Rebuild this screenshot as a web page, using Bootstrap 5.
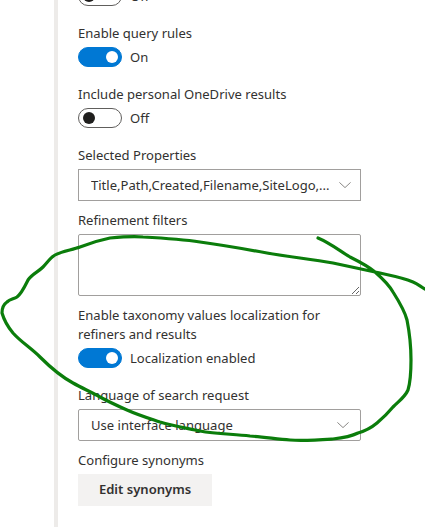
<!DOCTYPE html>
<html lang="en">
<head>
<meta charset="utf-8">
<title>Search settings</title>
<link href="https://cdn.jsdelivr.net/npm/bootstrap@5.3.0/dist/css/bootstrap.min.css" rel="stylesheet">
<style>
html,body{height:527px;overflow:hidden;background:#fff}
body{font-family:"Noto Sans","Open Sans",sans-serif;font-size:13.05px;color:#323130;position:relative}
.side-panel{margin-left:54px;border-left:4px solid #edebe9;padding-left:20px;width:307px;height:541px;margin-top:-14px;box-sizing:content-box}
.fld-wide{margin-top:17px}
.fld-tight{margin-top:9px}
.fld-label{display:block;height:24px;line-height:20px;margin:0;color:#323130}
.fld-label-two{height:43px;line-height:19px;padding-top:.5px}
.sw-row{height:20px;line-height:20px}
.form-check-input.sw{width:44px;height:20px;border-radius:10px;margin:0;float:none;flex:none;box-shadow:none;background-size:12px 12px;background-repeat:no-repeat}
.form-check-input.sw:checked{background-color:#0078d4;border-color:#0078d4;background-position:right 3px center;background-image:url("data:image/svg+xml,%3Csvg xmlns='http://www.w3.org/2000/svg' viewBox='0 0 12 12'%3E%3Ccircle cx='6' cy='6' r='6' fill='%23fff'/%3E%3C/svg%3E")}
.form-check-input.sw:not(:checked){background-color:#fff;border-color:#605e5c;background-position:left 4px center;background-image:url("data:image/svg+xml,%3Csvg xmlns='http://www.w3.org/2000/svg' viewBox='0 0 12 12'%3E%3Ccircle cx='6' cy='6' r='6' fill='%23201f1e'/%3E%3C/svg%3E")}
.pick{display:block;width:283px;height:32px;padding:0 28px 0 12px;font-size:13.05px;line-height:30px;color:#323130;border:1px solid #a19f9d;border-radius:0;box-shadow:none;text-overflow:ellipsis;background-size:12px 6px;background-position:right 9px center;background-image:url("data:image/svg+xml,%3Csvg xmlns='http://www.w3.org/2000/svg' viewBox='0 0 12 6'%3E%3Cpath d='M.4.4 6 5.6 11.6.4' fill='none' stroke='%238a8886' stroke-width='1'/%3E%3C/svg%3E")}
.pick.rounded-pick{border-radius:2px;background-position:right 11px center}
.area{display:block;width:283px;height:62px;min-height:0;border:1px solid #a19f9d;border-radius:2px;box-shadow:none;font-size:13.05px;padding:6px 8px}
.syn-btn{display:block;width:134px;height:32px;background:#f3f2f1;border:0;border-radius:0;font-size:13.05px;font-weight:600;color:#323130;padding:0}
.ink{position:absolute;left:0;top:0;pointer-events:none}
</style>
</head>
<body>
<div class="side-panel d-flex flex-column">
  <div class="d-flex align-items-center gap-2 sw-row">
    <input class="form-check-input sw" type="checkbox" role="switch" aria-label="Previous option">
    <span>Off</span>
  </div>
  <div class="fld-wide">
    <label class="fld-label">Enable query rules</label>
    <div class="d-flex align-items-center gap-2 sw-row">
      <input class="form-check-input sw" type="checkbox" role="switch" checked aria-label="Enable query rules">
      <span>On</span>
    </div>
  </div>
  <div class="fld-wide">
    <label class="fld-label">Include personal OneDrive results</label>
    <div class="d-flex align-items-center gap-2 sw-row">
      <input class="form-check-input sw" type="checkbox" role="switch" aria-label="Include personal OneDrive results">
      <span>Off</span>
    </div>
  </div>
  <div class="fld-wide">
    <label class="fld-label">Selected Properties</label>
    <select class="form-select pick" aria-label="Selected Properties"><option>Title,Path,Created,Filename,SiteLogo,...</option></select>
  </div>
  <div class="fld-tight">
    <label class="fld-label">Refinement filters</label>
    <textarea class="form-control area" aria-label="Refinement filters"></textarea>
  </div>
  <div class="fld-tight">
    <label class="fld-label fld-label-two">Enable taxonomy values localization for<br>refiners and results</label>
    <div class="d-flex align-items-center gap-2 sw-row">
      <input class="form-check-input sw" type="checkbox" role="switch" checked aria-label="Enable taxonomy values localization">
      <span>Localization enabled</span>
    </div>
  </div>
  <div class="fld-wide">
    <label class="fld-label">Language of search request</label>
    <select class="form-select pick rounded-pick" aria-label="Language of search request"><option>Use interface language</option></select>
  </div>
  <div class="fld-tight">
    <label class="fld-label">Configure synonyms</label>
    <button type="button" class="btn syn-btn">Edit synonyms</button>
  </div>
</div>
<svg class="ink" width="425" height="527" viewBox="0 0 425 527" fill="none" aria-hidden="true">
  <path d="M318 238C330 243 340 251 350 257C360 262 368 266 375 272C383 279 389 285 393 292C400 303 405 312 407 320C410 335 411 350 411 360C411 370 411 380 408 390C405 397 399 401 393 407C388 413 383 418 377 423C371 428 365 431 358 433C350 437 342 438 333 439C318 440 304 441 290 440C277 439 264 437 250 436C233 434 216 434 200 431C186 428 173 426 160 422C148 418 138 415 127 410C118 406 109 402 100 397C91 392 82 388 73 383C62 377 50 367 40 357C31 348 21 342 13 333C8 327 4 320 2 313C2 308 4 304 7 302C10 299 14 299 17 297C22 293 25 286 28 280C32 274 38 272 43 267C47 263 50 258 55 255C62 251 72 250 80 247C90 243 100 240 110 238C121 237 132 236 143 237C162 238 181 239 200 242C222 245 245 249 267 253C289 257 311 259 333 263C347 266 361 269 375 272C388 275 401 277 413 282C418 284 421 287 425 289" stroke="#0b7d0b" stroke-width="3.2" stroke-linecap="round" stroke-linejoin="round"/>
</svg>
<script src="https://cdn.jsdelivr.net/npm/bootstrap@5.3.0/dist/js/bootstrap.bundle.min.js"></script>
</body>
</html>
